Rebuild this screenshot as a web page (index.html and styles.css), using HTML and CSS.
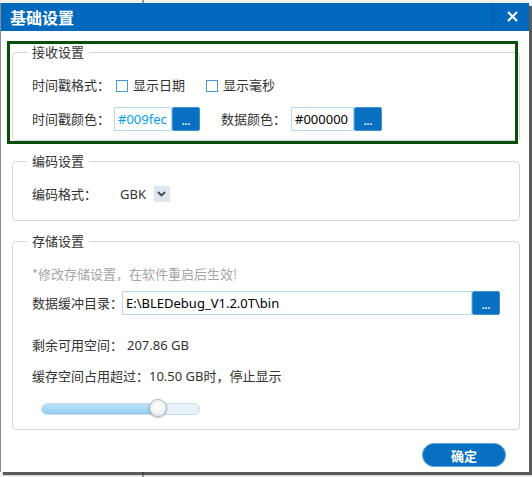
FILE: index.html
```html
<!DOCTYPE html>
<html lang="zh-CN">
<head>
<meta charset="utf-8">
<title>基础设置</title>
<link rel="stylesheet" href="styles.css">
</head>
<body>
<div class="window">
  <div class="titlebar">
    <span class="title">基础设置</span>
    <div class="close">
      <svg width="11" height="11" viewBox="0 0 11 11"><path d="M1 1L10 10M10 1L1 10" stroke="#fff" stroke-width="2.2" fill="none"/></svg>
    </div>
  </div>

  <fieldset class="group g1">
    <legend>接收设置</legend>
    <div class="row r1">
      <span class="label w84">时间戳格式：</span>
      <span class="check"><span class="box"></span>显示日期</span>
      <span class="check second"><span class="box"></span>显示毫秒</span>
    </div>
    <div class="row r2">
      <span class="label w82">时间戳颜色：</span>
      <span class="text-input color1">#009fec</span><span class="dots">...</span>
      <span class="label w70 gap21">数据颜色：</span>
      <span class="text-input color2">#000000</span><span class="dots">...</span>
    </div>
  </fieldset>

  <fieldset class="group g2">
    <legend>编码设置</legend>
    <div class="row r3">
      <span class="label w88">编码格式：</span>
      <span class="value">GBK</span>
      <span class="drop">
        <svg width="9" height="6" viewBox="0 0 9 6"><path d="M1 1L4.5 4.5L8 1" stroke="#444" stroke-width="1.8" fill="none"/></svg>
      </span>
    </div>
  </fieldset>

  <fieldset class="group g3">
    <legend>存储设置</legend>
    <div class="row hint">*修改存储设置，在软件重启后生效!</div>
    <div class="row dir">
      <span class="label w90">数据缓冲目录：</span>
      <span class="text-input path">E:\BLEDebug_V1.2.0T\bin</span><span class="dots">...</span>
    </div>
    <div class="row free">
      <span class="label w95">剩余可用空间：</span>
      <span class="value">207.86 GB</span>
    </div>
    <div class="row cache">缓存空间占用超过：10.50 GB时，停止显示</div>
    <div class="row slider-row">
      <div class="track">
        <div class="fill" style="width:116px"></div>
        <div class="thumb" style="left:107px"></div>
      </div>
    </div>
  </fieldset>

  <div class="footer">
    <span class="ok">确定</span>
  </div>

  <div class="highlight"></div>
</div>
</body>
</html>
```
FILE: styles.css
```css
html, body {
  margin: 0;
  padding: 0;
}
body {
  width: 532px;
  height: 477px;
  overflow: hidden;
  background: linear-gradient(to right, transparent 142px, #9a9a9a 142px, #9a9a9a 144px, transparent 144px), #f2f2f2;
  font-family: "Noto Sans", "Noto Sans CJK SC", sans-serif;
  font-size: 13px;
  color: #333;
}
.window {
  position: relative;
  margin-top: 3px;
  width: 528px;
  height: 469px;
  border-left: 1px solid #8c8c8c;
  background: #fff;
  box-shadow: 3px 3px 1px rgba(40, 40, 40, 0.75);
  display: flex;
  flex-direction: column;
}
.titlebar {
  height: 28px;
  background: #0068bd;
  display: flex;
  align-items: center;
  justify-content: space-between;
}
.title {
  font-family: "Noto Sans CJK SC", sans-serif;
  font-weight: bold;
  font-size: 16px;
  color: #fff;
  padding-left: 9px;
  line-height: 28px;
}
.close {
  width: 36px;
  height: 28px;
  border-left: 1px solid rgba(0, 0, 0, 0.18);
  display: flex;
  align-items: center;
  justify-content: center;
}
.close svg { margin-left: 2px; margin-top: -1px; }

.group {
  margin: 0 9px 0 11px;
  border: 1px solid #d6d6d6;
  border-radius: 4px;
  min-width: 0;
}
.group legend {
  padding: 0 5px;
  margin-left: -5px;
  line-height: 18px;
  font-family: "Noto Sans CJK SC", sans-serif;
  color: #333;
}
.g1 { margin-top: 12px; padding: 12px 10px 9px 19px; }
.g2 { margin-top: 11px; padding: 12px 10px 14px 19px; }
.g3 { margin-top: 11px; padding: 12px 10px 10px 19px; }

.row {
  display: flex;
  align-items: center;
  height: 24px;
  line-height: 18px;
  white-space: nowrap;
}
.r2 { margin-top: 10px; }
.label {
  font-family: "Noto Sans CJK SC", sans-serif;
  flex: none;
}
.w84 { width: 84px; }
.w82 { width: 82px; }
.w70 { width: 70px; }
.w88 { width: 88px; }
.w90 { width: 90px; }
.w95 { width: 95px; }
.gap21 { margin-left: 21px; }

.check {
  display: flex;
  align-items: center;
  font-family: "Noto Sans CJK SC", sans-serif;
}
.check.second { margin-left: 21px; }
.box {
  width: 10px;
  height: 10px;
  border: 1.5px solid #4a98d8;
  background: #fff;
  margin-right: 5px;
  margin-top: 1px;
}

.text-input {
  box-sizing: border-box;
  height: 24px;
  border: 1px solid #b4daf3;
  display: flex;
  align-items: center;
  padding-left: 3px;
  font-size: 13px;
}
.color1 { width: 58px; color: #009fec; }
.color2 { width: 63px; color: #000; }
.path { width: 350px; color: #000; }

.dots {
  box-sizing: border-box;
  width: 28px;
  height: 24px;
  background: #0870c1;
  border: 1px solid #3f8fd0;
  border-radius: 2px;
  color: #fff;
  font-size: 10px;
  font-weight: bold;
  display: flex;
  align-items: center;
  justify-content: center;
  padding-top: 3px;
  letter-spacing: 0;
}

.value { color: #333; }
.drop {
  width: 16px;
  height: 16px;
  margin-left: 8px;
  background: #dde7ef;
  display: flex;
  align-items: center;
  justify-content: center;
}

.hint {
  color: #a6a6a6;
  font-family: "Noto Sans CJK SC", sans-serif;
}
.dir { margin-top: 5px; }
.free { margin-top: 18px; }
.cache { margin-top: 7px; }
.slider-row { margin-top: 11px; height: 20px; padding-left: 9px; }
.track {
  position: relative;
  box-sizing: border-box;
  width: 159px;
  height: 12px;
  border-radius: 6px;
  background: #e9f2f9;
  border: 1px solid #c9dcea;
}
.fill {
  height: 10px;
  border-radius: 5px 0 0 5px;
  background: linear-gradient(#b7e1f8, #92cdef);
}
.thumb {
  position: absolute;
  top: -5px;
  width: 18px;
  height: 18px;
  box-sizing: border-box;
  border-radius: 50%;
  border: 1px solid #a9b3bb;
  background: radial-gradient(circle at 50% 40%, #ffffff 0%, #f1f3f5 55%, #d9dde1 100%);
  box-shadow: 0 1px 2px rgba(0, 0, 0, 0.25);
}

.footer {
  display: flex;
  justify-content: flex-end;
  padding: 13px 23px 0 0;
}
.ok {
  box-sizing: border-box;
  width: 84px;
  height: 24px;
  border-radius: 12px;
  background: #0870c1;
  border: 1px solid #5ea3da;
  color: #fff;
  font-family: "Noto Sans CJK SC", sans-serif;
  font-weight: bold;
  font-size: 13px;
  display: flex;
  align-items: center;
  justify-content: center;
}

.highlight {
  position: absolute;
  left: 6px;
  top: 38px;
  width: 511px;
  height: 103px;
  box-sizing: border-box;
  border: 3px solid #0b4d0b;
  pointer-events: none;
}
```
